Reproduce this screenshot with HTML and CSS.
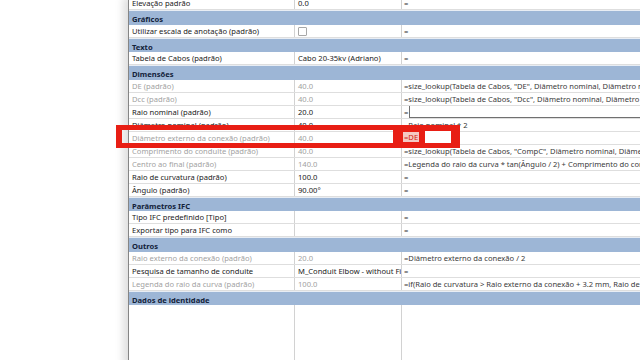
FILE: index.html
```html
<!DOCTYPE html>
<html lang="pt">
<head>
  <meta charset="UTF-8">
  <meta name="viewport" content="width=device-width, initial-scale=1.0">
  <title>Parâmetros de tipo</title>
  <link rel="stylesheet" href="styles.css">
</head>
<body>
  <div class="page">
    <div class="panel">
      <div class="row">
        <div class="cell">Elevação padrão</div>
        <div class="cell">0.0</div>
        <div class="cell formula">=</div>
      </div>
      <div class="group">Gráficos</div>
      <div class="row">
        <div class="cell">Utilizar escala de anotação (padrão)</div>
        <div class="cell"><span class="check"></span></div>
        <div class="cell formula">=</div>
      </div>
      <div class="group">Texto</div>
      <div class="row">
        <div class="cell">Tabela de Cabos (padrão)</div>
        <div class="cell">Cabo 20-35kv (Adriano)</div>
        <div class="cell formula">=</div>
      </div>
      <div class="group">Dimensões</div>
      <div class="row muted">
        <div class="cell">DE (padrão)</div>
        <div class="cell">40.0</div>
        <div class="cell formula">=size_lookup(Tabela de Cabos, "DE", Diâmetro nominal, Diâmetro nominal)</div>
      </div>
      <div class="row muted">
        <div class="cell">Dcc (padrão)</div>
        <div class="cell">40.0</div>
        <div class="cell formula">=size_lookup(Tabela de Cabos, "Dcc", Diâmetro nominal, Diâmetro nominal)</div>
      </div>
      <div class="row">
        <div class="cell">Raio nominal (padrão)</div>
        <div class="cell">20.0</div>
        <div class="cell formula editing">=<span class="edit-box"></span></div>
      </div>
      <div class="row">
        <div class="cell">Diâmetro nominal (padrão)</div>
        <div class="cell">40.0</div>
        <div class="cell formula">=Raio nominal * 2</div>
      </div>
      <div class="row muted">
        <div class="cell">Diâmetro externo da conexão (padrão)</div>
        <div class="cell">40.0</div>
        <div class="cell formula">=DE</div>
      </div>
      <div class="row muted">
        <div class="cell">Comprimento do conduite (padrão)</div>
        <div class="cell">40.0</div>
        <div class="cell formula">=size_lookup(Tabela de Cabos, "CompC", Diâmetro nominal, Diâmetro nominal)</div>
      </div>
      <div class="row muted">
        <div class="cell">Centro ao final (padrão)</div>
        <div class="cell">140.0</div>
        <div class="cell formula">=Legenda do raio da curva * tan(Ângulo / 2) + Comprimento do conduite</div>
      </div>
      <div class="row">
        <div class="cell">Raio de curvatura (padrão)</div>
        <div class="cell">100.0</div>
        <div class="cell formula">=</div>
      </div>
      <div class="row">
        <div class="cell">Ângulo (padrão)</div>
        <div class="cell">90.00°</div>
        <div class="cell formula">=</div>
      </div>
      <div class="group">Parâmetros IFC</div>
      <div class="row">
        <div class="cell">Tipo IFC predefinido [Tipo]</div>
        <div class="cell"></div>
        <div class="cell formula">=</div>
      </div>
      <div class="row">
        <div class="cell">Exportar tipo para IFC como</div>
        <div class="cell"></div>
        <div class="cell formula">=</div>
      </div>
      <div class="group">Outros</div>
      <div class="row muted">
        <div class="cell">Raio externo da conexão (padrão)</div>
        <div class="cell">20.0</div>
        <div class="cell formula">=Diâmetro externo da conexão / 2</div>
      </div>
      <div class="row">
        <div class="cell">Pesquisa de tamanho de conduite</div>
        <div class="cell">M_Conduit Elbow - without Fittings</div>
        <div class="cell formula">=</div>
      </div>
      <div class="row muted">
        <div class="cell">Legenda do raio da curva (padrão)</div>
        <div class="cell">100.0</div>
        <div class="cell formula">=if(Raio de curvatura &gt; Raio externo da conexão + 3.2 mm, Raio de curvatura, Raio externo da conexão + 3.2 mm)</div>
      </div>
      <div class="group">Dados de identidade</div>
      <div class="row empty">
        <div class="cell"></div>
        <div class="cell"></div>
        <div class="cell"></div>
      </div>
    </div>

    <!-- red highlight drawn over the "Diâmetro externo da conexão" row -->
    <div class="mark">
      <div class="mark-open"></div>
      <div class="mark-fill">
        <span class="mark-text">=DE</span>
        <span class="mark-hole"></span>
      </div>
    </div>
  </div>
</body>
</html>
```

FILE: styles.css
```css
body {
  margin: 0;
  background: #ffffff;
  font-family: "Noto Sans", "Open Sans", sans-serif;
  font-size: 7.6px;
  color: #222;
  overflow: hidden;
}

.page {
  position: relative;
  height: 360px;
  overflow: hidden;
}

.panel {
  display: flex;
  flex-direction: column;
  width: 580px;
  height: 370px;
  margin: -3px 0 0 128px;
  background: #fff;
  border-left: 1px solid #858585;
  box-shadow: -5px 0 8px rgba(0, 0, 0, 0.13);
}

.row {
  display: grid;
  grid-template-columns: 166px 107px 1fr;
  height: 13px;
  flex: 0 0 13px;
  box-sizing: border-box;
  border-bottom: 1px solid #dedede;
}

.cell {
  padding-left: 3px;
  line-height: 12px;
  white-space: nowrap;
  overflow: hidden;
  border-right: 1px solid #d2d2d2;
}

.formula {
  border-right: none;
  padding-left: 2px;
  color: #333;
}

.muted .cell {
  color: #a2a2a2;
}

.muted .formula {
  color: #3a3a3a;
}

.editing {
  display: flex;
  align-items: center;
}

.edit-box {
  flex: 1;
  height: 11px;
  margin-left: 1px;
  border: 1px solid #707070;
  background: #fff;
}

.check {
  display: inline-block;
  width: 7px;
  height: 7px;
  margin-top: 2px;
  border: 1px solid #a8a8a8;
  border-radius: 1px;
  vertical-align: top;
}

.group {
  flex: 0 0 14.5px;
  height: 14.5px;
  box-sizing: border-box;
  padding: 2px 0 0 3px;
  line-height: 12px;
  background: #9db6d6;
  border-top: 1px solid #e8edf4;
  color: #13223a;
  font-weight: bold;
}

.empty {
  flex: 1;
  border-bottom: none;
}

.mark {
  position: absolute;
  left: 116px;
  top: 125px;
  width: 344px;
  height: 23px;
  box-sizing: border-box;
  display: flex;
  border: 5px solid #e81e14;
  border-left-width: 6px;
  border-right: none;
}

.mark-open {
  flex: 1;
}

.mark-fill {
  display: flex;
  align-items: center;
  width: 67px;
  margin: -1px 0;
  background: #e81e14;
}

.mark-text {
  margin-left: 10px;
  padding: 0 1px;
  line-height: 10px;
  background: #f4c9c4;
  color: #d21a10;
}

.mark-hole {
  width: 26px;
  height: 12px;
  margin-left: 6px;
  background: #fff;
}
```
